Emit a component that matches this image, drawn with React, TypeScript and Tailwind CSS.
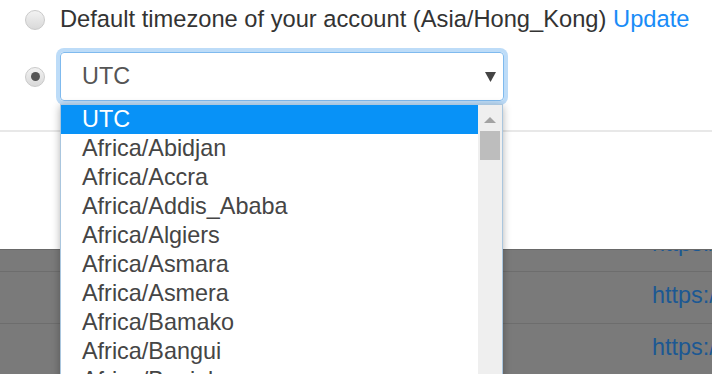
import React from "react";

const items = [
  "UTC",
  "Africa/Abidjan",
  "Africa/Accra",
  "Africa/Addis_Ababa",
  "Africa/Algiers",
  "Africa/Asmara",
  "Africa/Asmera",
  "Africa/Bamako",
  "Africa/Bangui",
  "Africa/Banjul",
];

function Radio({ checked }: { checked?: boolean }) {
  return (
    <div className="w-[20px] h-[20px] rounded-full border border-[#cacaca] bg-gradient-to-b from-[#f2f2f2] to-[#d9d9d9] flex items-center justify-center shrink-0">
      {checked && <div className="w-[9px] h-[9px] rounded-full bg-[#555]" />}
    </div>
  );
}

export default function App() {
  return (
    <div
      className="relative w-[712px] h-[374px] overflow-hidden bg-white"
      style={{ fontFamily: '"Liberation Sans", Arial, sans-serif' }}
    >
      {/* white panel */}
      <div className="h-[249px] bg-white flex flex-col">
        <div className="h-[40px] flex items-center pl-[25px] gap-[15px] whitespace-nowrap">
          <Radio />
          <span className="text-[23.7px] text-[#333]">
            Default timezone of your account (Asia/Hong_Kong){" "}
            <span className="text-[#1a8cf7]">Update</span>
          </span>
        </div>
        <div className="mt-[12px] flex items-center pl-[25px] gap-[15px]">
          <Radio checked />
          <div className="w-[444px] h-[49px] rounded-[4px] border border-[#7fbaee] shadow-[0_0_0_4px_#bddcf8] flex items-center justify-between pl-[21px] pr-[7px]">
            <span className="text-[23.4px] text-[#555]">UTC</span>
            <svg width="11" height="10" viewBox="0 0 11 10">
              <path d="M0 0 H11 L5.5 10 Z" fill="#444" />
            </svg>
          </div>
        </div>
        <div className="mt-[29px] h-[2px] bg-[#e8e8e8]" />
      </div>

      {/* dimmed page behind */}
      <div className="h-[125px] bg-[#7a7a7a] border-t border-[#696969] overflow-hidden">
        {[0, 1, 2].map((i) => (
          <div
            key={i}
            className={`h-[52px] border-b border-[#6d6d6d] flex items-center pl-[652px] whitespace-nowrap ${i === 0 ? "-mt-[30px]" : ""}`}
          >
            <span className="text-[23.4px] text-[#1c5893] pb-[4px]">https://</span>
          </div>
        ))}
      </div>

      {/* open dropdown list */}
      <div className="absolute left-[60px] top-[104px] w-[443px] h-[290px] bg-white border border-[#aac6de] shadow-[0_2px_8px_rgba(0,0,0,0.3)] flex">
        <div className="flex-1 flex flex-col">
          {items.map((t, i) => (
            <div
              key={t}
              className={`h-[29px] shrink-0 flex items-center pl-[21px] text-[23.4px] whitespace-nowrap ${
                i === 0 ? "bg-[#0892f7] text-white" : "text-[#454545]"
              }`}
            >
              {t}
            </div>
          ))}
        </div>
        <div className="w-[24px] bg-[#efefef] flex flex-col items-center">
          <svg className="mt-[12px]" width="12" height="6" viewBox="0 0 12 6">
            <path d="M6 0 L12 6 H0 Z" fill="#a3a3a3" />
          </svg>
          <div className="mt-[8px] w-[20px] h-[29px] bg-[#bdbdbd]" />
        </div>
      </div>
    </div>
  );
}
